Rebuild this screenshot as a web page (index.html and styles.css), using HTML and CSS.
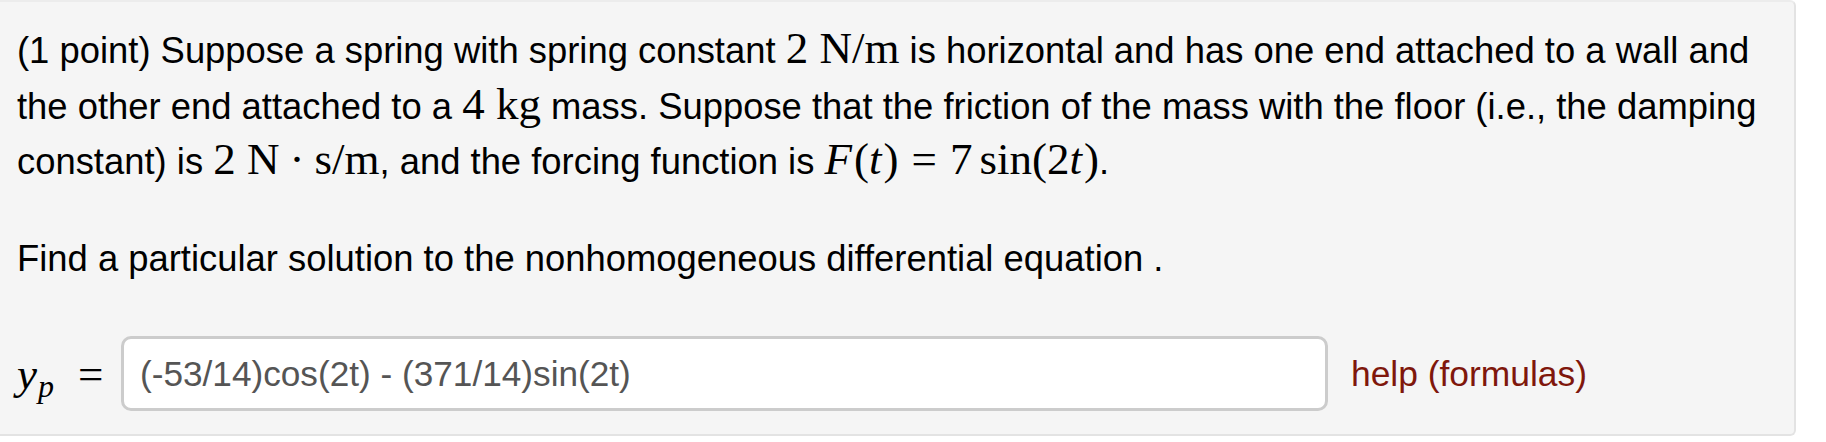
FILE: index.html
```html
<!DOCTYPE html>
<html>
<head>
<meta charset="utf-8">
<link rel="stylesheet" href="styles.css">
</head>
<body>
<div class="panel">
  <p class="problem">(1 point) Suppose a spring with spring constant <span class="m">2&nbsp;N/m</span> is horizontal and has one end attached to a wall and<br>the other end attached to a <span class="m">4&nbsp;kg</span> mass. Suppose that the friction of the mass with the floor (i.e., the damping<br>constant) is <span class="m">2&nbsp;N<span class="op">·</span>s/m</span>, and the forcing function is <span class="m"><i>F</i>(<i>t</i>)<span class="rel">=</span>7<span class="thin"></span>sin(2<i>t</i>)</span>.</p>
  <p class="task">Find a particular solution to the nonhomogeneous differential equation .</p>
  <div class="answer-row">
    <span class="m label"><i>y</i><sub><i>p</i></sub><span class="rel">=</span></span>
    <div class="answer-box">(-53/14)cos(2t) - (371/14)sin(2t)</div>
    <a class="help" href="#">help (formulas)</a>
  </div>
</div>
</body>
</html>
```
FILE: styles.css
```css
html, body {
  margin: 0;
  padding: 0;
  background: #ffffff;
}

.panel {
  box-sizing: border-box;
  width: 1796px;
  height: 436px;
  background: #f5f5f5;
  border: 2px solid #e3e3e3;
  border-left: none;
  border-top-color: #ececec;
  border-radius: 0 6px 6px 0;
  padding: 20px 0 0 17px;
  font-family: "Liberation Sans", Arial, Helvetica, sans-serif;
  font-size: 36.4px;
  line-height: 52.6px;
  color: #000;
}

.problem, .task {
  margin: 0;
  white-space: nowrap;
}

.task {
  margin-top: 44px;
}

.m {
  font-family: "Liberation Serif", "Times New Roman", serif;
  font-size: 45px;
}

.m i {
  font-style: italic;
  margin-right: 2px;
}

.op {
  margin: 0 10px;
}

.rel {
  margin: 0 13px;
}

.thin {
  display: inline-block;
  width: 7px;
}

.answer-row {
  display: flex;
  align-items: center;
  margin-top: 51px;
  height: 75px;
}

.label {
  width: 104px;
  white-space: nowrap;
}

.label i {
  margin-right: 0;
}

.label sub {
  font-size: 32px;
  vertical-align: -8px;
  line-height: 0;
  margin-left: 1px;
}

.label .rel {
  margin: 0 0 0 24px;
}

.answer-box {
  box-sizing: border-box;
  width: 1207px;
  height: 75px;
  background: #ffffff;
  border: 3px solid #cccccc;
  border-radius: 10px;
  padding: 0 16px;
  display: flex;
  align-items: center;
  color: #555555;
  font-size: 35.2px;
}

.help {
  margin-left: 23px;
  color: #7f170c;
  text-decoration: none;
  font-size: 35.4px;
}
```
